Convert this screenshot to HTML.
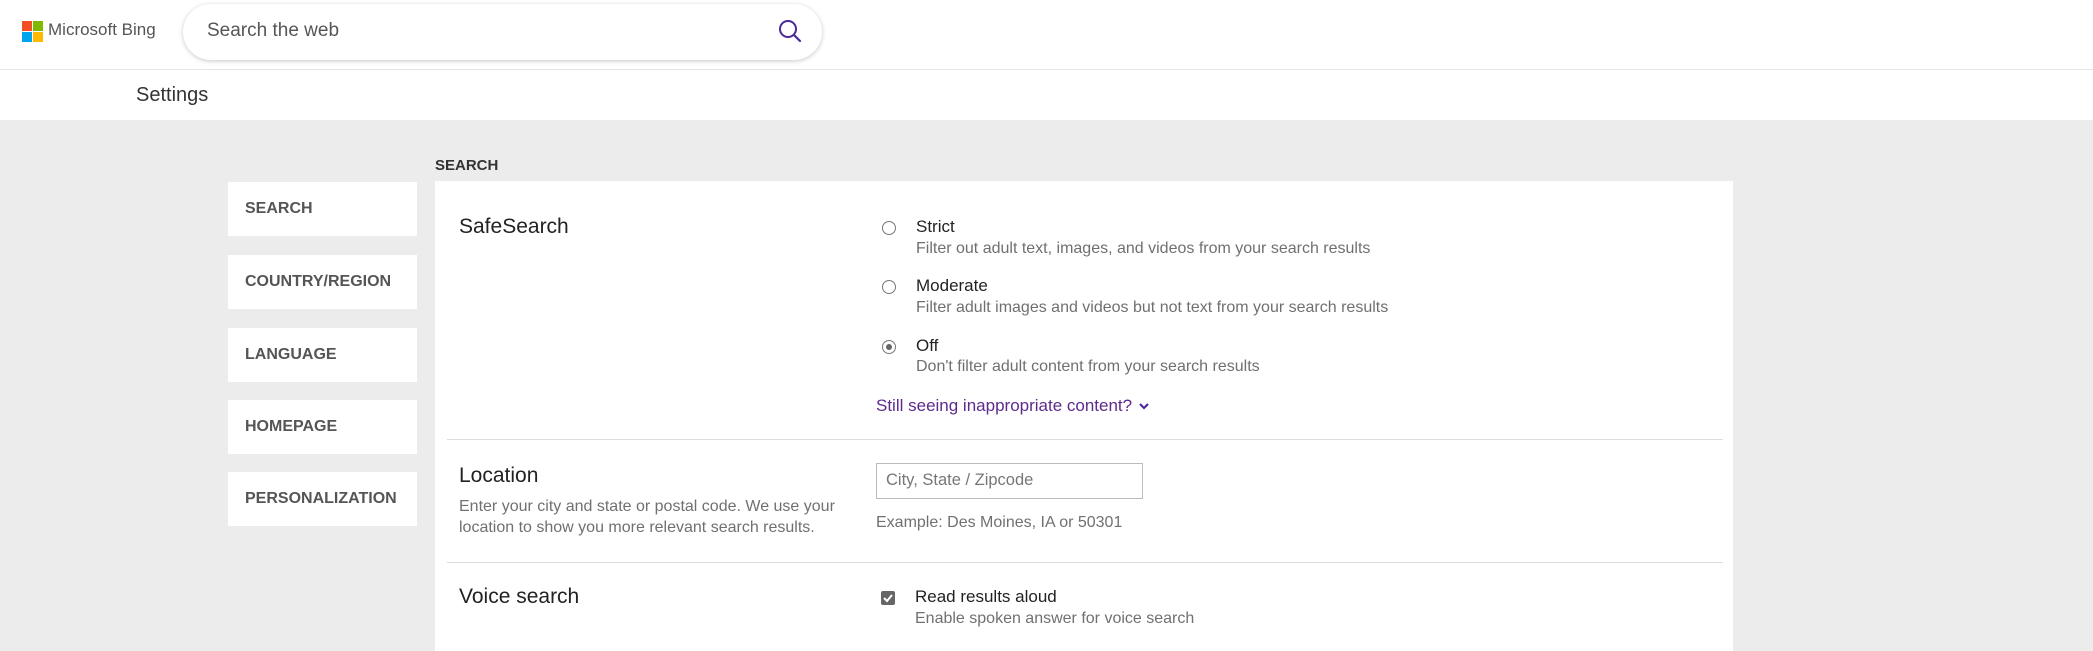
<!DOCTYPE html>
<html><head><meta charset="utf-8"><style>
*{margin:0;padding:0;box-sizing:border-box}
body{width:2093px;height:640px;overflow:hidden;background:#ececec;font-family:"Liberation Sans",sans-serif;position:relative;color:#222}
.a{position:absolute;white-space:nowrap}
#top{position:absolute;left:0;top:0;width:2093px;height:120px;background:#fff}
#line{position:absolute;left:0;top:69px;width:2093px;height:1px;background:#e5e5e5}
.nav{position:absolute;left:228px;width:189px;height:54px;background:#fff;font-weight:bold;font-size:16px;color:#555;padding-left:17px;line-height:54px}
#panel{position:absolute;left:435px;top:181px;width:1298px;height:470px;background:#fff}
.h{font-size:21px;color:#222}
.lbl{font-size:17px;color:#222}
.d{font-size:16px;color:#707070}
.radio{position:absolute;width:14px;height:14px;border:1px solid #777;border-radius:50%;background:#fff}
.hr{position:absolute;left:447px;width:1276px;height:1px;background:#ddd}
</style></head><body>
<div id="top"></div><div id="line"></div>
<svg class="a" style="left:22px;top:21px" width="21" height="21"><rect x="0" y="0" width="10" height="10" fill="#f25022"/><rect x="11" y="0" width="10" height="10" fill="#7fba00"/><rect x="0" y="11" width="10" height="10" fill="#00a4ef"/><rect x="11" y="11" width="10" height="10" fill="#ffb900"/></svg>
<div class="a" style="left:48px;top:20px;font-size:17px;color:#555">Microsoft Bing</div>
<div class="a" style="left:183px;top:4px;width:639px;height:56px;border-radius:28px;background:#fff;box-shadow:0 1px 5px rgba(0,0,0,.22)"></div>
<div class="a" style="left:207px;top:20px;font-size:19px;color:#555">Search the web</div>
<svg class="a" style="left:777px;top:18px" width="26" height="26" viewBox="0 0 26 26"><circle cx="11" cy="11" r="8" fill="none" stroke="#4a2a9a" stroke-width="2"/><line x1="17" y1="17" x2="23" y2="23" stroke="#4a2a9a" stroke-width="2.2" stroke-linecap="round"/></svg>
<div class="a" style="left:136px;top:84px;font-size:20px;color:#333">Settings</div>

<div class="nav" style="top:182px">SEARCH</div>
<div class="nav" style="top:255px">COUNTRY/REGION</div>
<div class="nav" style="top:328px">LANGUAGE</div>
<div class="nav" style="top:400px">HOMEPAGE</div>
<div class="nav" style="top:472px">PERSONALIZATION</div>

<div class="a" style="left:435px;top:157px;font-size:15px;font-weight:bold;color:#333">SEARCH</div>
<div id="panel"></div>
<div class="a h" style="left:459px;top:215px">SafeSearch</div>
<div class="radio" style="left:882px;top:221px"></div>
<div class="a lbl" style="left:916px;top:217px">Strict</div>
<div class="a d" style="left:916px;top:240px">Filter out adult text, images, and videos from your search results</div>
<div class="radio" style="left:882px;top:280px"></div>
<div class="a lbl" style="left:916px;top:276px">Moderate</div>
<div class="a d" style="left:916px;top:299px">Filter adult images and videos but not text from your search results</div>
<div class="radio" style="left:882px;top:340px"><div style="position:absolute;left:3px;top:3px;width:6px;height:6px;border-radius:50%;background:#666"></div></div>
<div class="a lbl" style="left:916px;top:336px">Off</div>
<div class="a d" style="left:916px;top:358px">Don't filter adult content from your search results</div>
<div class="a" style="left:876px;top:396px;font-size:17px;color:#5e2a8c">Still seeing inappropriate content?</div>
<svg class="a" style="left:1138px;top:402px" width="12" height="10"><path d="M2 2 L6 6 L10 2" fill="none" stroke="#4a2a9a" stroke-width="2.2"/></svg>
<div class="hr" style="top:439px"></div>
<div class="a h" style="left:459px;top:464px">Location</div>
<div class="a d" style="left:459px;top:496px;line-height:21px">Enter your city and state or postal code. We use your<br>location to show you more relevant search results.</div>
<div class="a" style="left:876px;top:463px;width:267px;height:36px;border:1px solid #bbb"></div>
<div class="a" style="left:886px;top:471px;font-size:16.5px;color:#777">City, State / Zipcode</div>
<div class="a d" style="left:876px;top:514px">Example: Des Moines, IA or 50301</div>
<div class="hr" style="top:562px"></div>
<div class="a h" style="left:459px;top:585px">Voice search</div>
<div class="a" style="left:881px;top:591px;width:14px;height:14px;background:#666;border-radius:2px"><svg width="14" height="14" style="position:absolute;left:0;top:0"><path d="M3 7 L6 10 L11 4" fill="none" stroke="#fff" stroke-width="2"/></svg></div>
<div class="a lbl" style="left:915px;top:587px">Read results aloud</div>
<div class="a d" style="left:915px;top:610px">Enable spoken answer for voice search</div>
</body></html>
